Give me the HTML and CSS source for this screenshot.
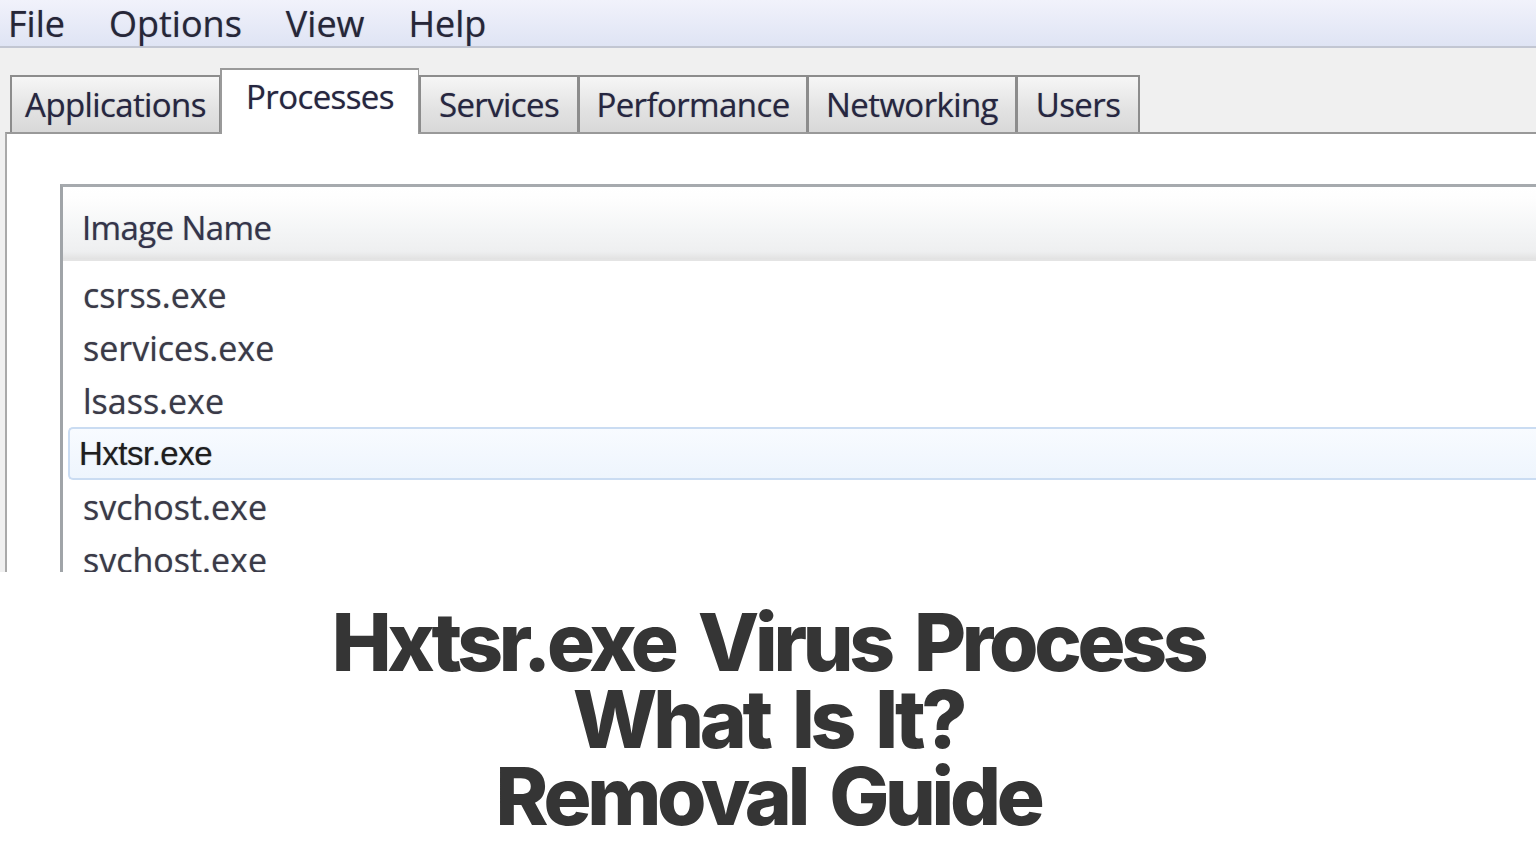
FILE: index.html
```html
<!DOCTYPE html>
<html>
<head>
  <title>Hxtsr.exe Virus Process - What Is It? Removal Guide</title>
  <link rel="stylesheet" href="styles.css">
</head>
<body>
  <div class="shot">
    <div class="menubar">
      <span class="menu-item">File</span>
      <span class="menu-item">Options</span>
      <span class="menu-item">View</span>
      <span class="menu-item">Help</span>
    </div>

    <div class="tabs">
      <div class="tab tab-apps">Applications</div>
      <div class="tab tab-procs active">Processes</div>
      <div class="tab tab-services">Services</div>
      <div class="tab tab-perf">Performance</div>
      <div class="tab tab-net">Networking</div>
      <div class="tab tab-users">Users</div>
    </div>

    <div class="panel">
      <div class="listview">
        <div class="list-header">Image Name</div>
        <div class="list-body">
          <div class="row">csrss.exe</div>
          <div class="row">services.exe</div>
          <div class="row">lsass.exe</div>
          <div class="row selected">Hxtsr.exe</div>
          <div class="row">svchost.exe</div>
          <div class="row">svchost.exe</div>
        </div>
      </div>
    </div>
  </div>

  <h1 class="title">
    Hxtsr.exe Virus Process<br>
    What Is It?<br>
    Removal Guide
  </h1>
</body>
</html>
```

FILE: styles.css
```css
body {
  margin: 0;
  background-color: #fff;
  font-family: "Open Sans", "Noto Sans", sans-serif;
}

/* screenshot part */
.shot {
  height: 572px;
  overflow: hidden;
  background-color: #f0f0f0;
}
.menubar {
  height: 46px;
  display: flex;
  align-items: center;
  padding-left: 8px;
  background: linear-gradient(#f1f2fb, #dfe4f4);
  border-bottom: 2px solid #c2c6d2;
  color: #262638;
  font-size: 36px;
  text-shadow: 0 0 1px rgba(40, 40, 70, 0.5);
}
.menu-item {
  margin-right: 44px;
}

.tabs {
  height: 84px;
  display: flex;
  align-items: flex-end;
  padding-left: 10px;
}
.tab {
  height: 57px;
  display: flex;
  align-items: center;
  justify-content: center;
  box-sizing: border-box;
  border: 2px solid #8c8c8c;
  border-bottom: none;
  border-right-width: 1px;
  background: linear-gradient(#f6f6f6, #e2e2e2 60%, #d8d8d8);
  color: #262640;
  font-size: 33px;
  letter-spacing: -0.6px;
  text-shadow: 0 0 1px rgba(40, 40, 70, 0.5);
}
.tab.active {
  height: 66px;
  background: #fff;
  margin-bottom: -2px;
  padding-bottom: 12px;
  border-color: #9a9a9a;
}
.tab-apps { width: 210px; }
.tab-procs { width: 199px; }
.tab-services { width: 159px; }
.tab-perf { width: 229px; }
.tab-net { width: 209px; }
.tab-users { width: 124px; border-right-width: 2px; }

.panel {
  margin-left: 5px;
  height: 460px;
  background-color: #fff;
  border-top: 2px solid #999;
  border-left: 2px solid #a9a9a9;
  padding: 50px 0 0 53px;
}
.listview {
  border-top: 3px solid #a6aaae;
  border-left: 3px solid #a0a4a8;
  height: 420px;
}
.list-header {
  height: 74px;
  box-sizing: border-box;
  display: flex;
  align-items: center;
  padding: 8px 0 0 19px;
  background: linear-gradient(#fff, #fdfdfd 20%, #f4f5f6 60%, #eeeff0 90%, #e2e2e2);
  border-bottom: 2px solid #e4e4e4;
  color: #34344a;
  font-size: 33px;
  letter-spacing: -0.6px;
  text-shadow: 0 0 1px rgba(40, 40, 70, 0.5);
}
.list-body {
  padding-top: 7px;
}
.row {
  height: 53px;
  display: flex;
  align-items: center;
  padding-left: 20px;
  color: #3a3a48;
  font-size: 34px;
  text-shadow: 0 0 1px rgba(40, 40, 60, 0.5);
}
.row.selected {
  margin-left: 5px;
  padding-left: 9px;
  box-sizing: border-box;
  border: 2px solid #cadcf2;
  border-right: none;
  border-radius: 5px 0 0 5px;
  background: linear-gradient(#f8fbff, #eef5fd);
  color: #1e1e1e;
  font-family: "Liberation Sans", Arial, sans-serif;
  font-size: 33px;
  letter-spacing: -0.5px;
}

/* title part */
.title {
  margin: 31px 0 0;
  text-align: center;
  font-family: Inter, "Open Sans", sans-serif;
  font-weight: 800;
  font-size: 80px;
  line-height: 77px;
  letter-spacing: -4.3px;
  word-spacing: 10px;
  color: #353535;
}
```
